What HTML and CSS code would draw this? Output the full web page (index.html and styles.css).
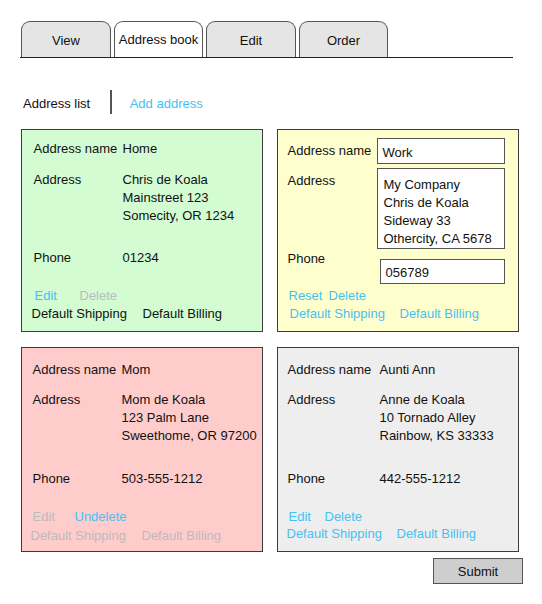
FILE: index.html
```html
<!DOCTYPE html>
<html>
<head>
<meta charset="utf-8">
<link rel="stylesheet" href="styles.css">
</head>
<body>
<div class="page">
  <div class="tabs">
    <div class="tab">View</div>
    <div class="tab active">Address book</div>
    <div class="tab">Edit</div>
    <div class="tab">Order</div>
  </div>

  <div class="subnav">
    <span>Address list</span>
    <span class="sep"></span>
    <span class="link">Add address</span>
  </div>

  <div class="grid">
    <div class="card card-home">
      <div class="row r-name"><span>Address name</span><span>Home</span></div>
      <div class="row r-addr"><span>Address</span><span>Chris de Koala<br>Mainstreet 123<br>Somecity, OR 1234</span></div>
      <div class="row r-phone"><span>Phone</span><span>01234</span></div>
      <div class="actions"><span class="link">Edit</span><span class="muted">Delete</span></div>
      <div class="defaults"><span>Default Shipping</span><span>Default Billing</span></div>
    </div>

    <div class="card card-work">
      <div class="frow f-name"><span class="flabel">Address name</span><div class="input">Work</div></div>
      <div class="frow f-addr"><span class="flabel">Address</span><div class="input textarea">My Company<br>Chris de Koala<br>Sideway 33<br>Othercity, CA 5678</div></div>
      <div class="frow f-phone"><span class="flabel">Phone</span><div class="input phone">056789</div></div>
      <div class="actions"><span class="link">Reset</span><span class="link">Delete</span></div>
      <div class="defaults"><span class="link">Default Shipping</span><span class="link">Default Billing</span></div>
    </div>

    <div class="card card-mom">
      <div class="row r-name"><span>Address name</span><span>Mom</span></div>
      <div class="row r-addr"><span>Address</span><span>Mom de Koala<br>123 Palm Lane<br>Sweethome, OR 97200</span></div>
      <div class="row r-phone"><span>Phone</span><span>503-555-1212</span></div>
      <div class="actions"><span class="muted">Edit</span><span class="link">Undelete</span></div>
      <div class="defaults"><span class="muted">Default Shipping</span><span class="muted">Default Billing</span></div>
    </div>

    <div class="card card-ann">
      <div class="row r-name"><span>Address name</span><span>Aunti Ann</span></div>
      <div class="row r-addr"><span>Address</span><span>Anne de Koala<br>10 Tornado Alley<br>Rainbow, KS 33333</span></div>
      <div class="row r-phone"><span>Phone</span><span>442-555-1212</span></div>
      <div class="actions"><span class="link">Edit</span><span class="link">Delete</span></div>
      <div class="defaults"><span class="link">Default Shipping</span><span class="link">Default Billing</span></div>
    </div>
  </div>

  <div class="footer">
    <div class="submit">Submit</div>
  </div>
</div>
</body>
</html>
```

FILE: styles.css
```css
* { box-sizing: border-box; }

body {
  margin: 0;
  background: #ffffff;
  font-family: "Liberation Sans", Arial, sans-serif;
  font-size: 13px;
  color: #111;
}

.page {
  padding: 21px 0 0 20px;
}

/* tabs */
.tabs {
  display: flex;
  gap: 3px;
  width: 493px;
  padding-left: 1px;
  border-bottom: 1.5px solid #222;
}

.tab {
  width: 90px;
  height: 36px;
  padding-top: 2px;
  display: flex;
  align-items: center;
  justify-content: center;
  background: #e5e5e5;
  border: 1.5px solid #555;
  border-bottom: none;
  border-radius: 9px 9px 0 0;
}

.tab:nth-child(2),
.tab:nth-child(4) { width: 89px; }

.tab.active {
  background: #ffffff;
  padding-top: 0;
}

/* sub navigation */
.subnav {
  display: flex;
  align-items: center;
  height: 24px;
  margin-top: 32px;
  padding-left: 3px;
}

.subnav > span:first-child { padding-top: 3px; }
.subnav .link { margin-left: 18px; padding-top: 3px; }

.sep {
  width: 1.5px;
  height: 24px;
  background: #555;
  margin-left: 20px;
}

.link { color: #45c1f5; }
.muted { color: #bbbbbb; }

/* cards */
.grid {
  display: grid;
  grid-template-columns: 242px 242px;
  column-gap: 14px;
  row-gap: 15px;
  margin-top: 15px;
  margin-left: 1px;
}

.card {
  border: 1.5px solid #3c3c3c;
  line-height: 18px;
  white-space: nowrap;
  --lab: 89px;
  --a1: 45px;
  --d1: 111px;
  --pl: 11.5px;
  padding-left: var(--pl);
  padding-right: 4px;
}

.card-home { background: #d3fcd3; height: 203px; padding-top: 10px; --a1: 45px; --d1: 111px; }
.card-work { background: #ffffcd; height: 203px; padding-top: 7.5px; --pl: 9.5px; --a1: 40px; --d1: 110px; }
.card-mom  { background: #ffcccc; height: 205px; padding-top: 13px; --pl: 10.5px; --a1: 42px; --d1: 111px; }
.card-ann  { background: #eeeeee; height: 205px; padding-top: 13px; --pl: 9.5px; --lab: 92px; --a1: 36px; --d1: 110px; }

.row {
  display: grid;
  grid-template-columns: var(--lab) 1fr;
}

.card-home .r-addr { margin-top: 13px; }
.card-home .r-phone { margin-top: 24px; }
.card-mom .r-addr, .card-ann .r-addr { margin-top: 12px; }
.card-mom .r-phone, .card-ann .r-phone { margin-top: 25px; }

.actions, .defaults {
  display: flex;
  white-space: nowrap;
}

.actions span:first-child { width: var(--a1); }
.defaults span:first-child { width: var(--d1); }

.actions { margin-top: 20px; padding-left: 1px; }
.defaults { margin-left: -2px; }

.card-mom .actions { padding-left: 0; }
.card-mom .defaults { margin-top: 1px; }
.card-ann .defaults { margin-top: -1px; margin-left: -1px; }

/* work card form */
.frow {
  display: flex;
  align-items: flex-start;
}

.flabel {
  width: 89px;
  margin-top: 4px;
}

.input {
  background: #ffffff;
  border: 1.5px solid #555;
  width: 128px;
  height: 26px;
  padding: 5px 0 0 5px;
  line-height: 18px;
}

.f-addr { margin-top: 4px; }

.textarea {
  height: 81px;
  padding: 7px 0 0 6px;
}

.f-phone { margin-top: -1px; }
.f-phone .flabel { margin-top: 2px; }

.input.phone {
  width: 125px;
  height: 25px;
  padding-top: 4px;
  margin-top: 11px;
  margin-left: 3px;
}

.card-work .actions { margin-top: 3px; }
.card-work .defaults { margin-left: 2px; }

/* footer */
.footer {
  display: flex;
  justify-content: flex-end;
  width: 503px;
  margin-top: 6px;
}

.submit {
  width: 90px;
  height: 26px;
  padding-top: 1px;
  display: flex;
  align-items: center;
  justify-content: center;
  background: #cecece;
  border: 1.5px solid #555;
}
```
